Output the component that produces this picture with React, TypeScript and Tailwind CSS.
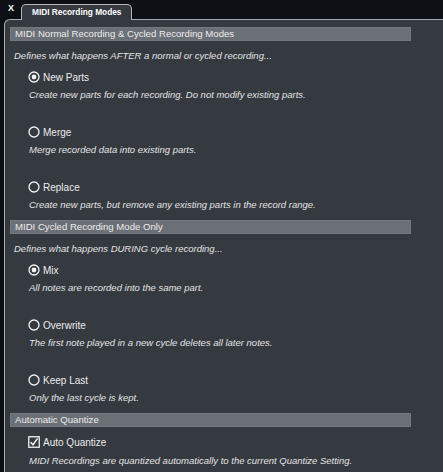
import React from "react";

type Option = { label: string; desc: string; checked?: boolean };

const normalModes: Option[] = [
  { label: "New Parts", desc: "Create new parts for each recording. Do not modify existing parts.", checked: true },
  { label: "Merge", desc: "Merge recorded data into existing parts." },
  { label: "Replace", desc: "Create new parts, but remove any existing parts in the record range." },
];

const cycledModes: Option[] = [
  { label: "Mix", desc: "All notes are recorded into the same part.", checked: true },
  { label: "Overwrite", desc: "The first note played in a new cycle deletes all later notes." },
  { label: "Keep Last", desc: "Only the last cycle is kept." },
];

function SectionHeader({ title }: { title: string }) {
  return (
    <div className="h-[14px] w-[401px] bg-[#6b6f76] border border-[#73777e] flex items-center pl-[4px] text-[9.6px] leading-none text-[#ececec]">
      {title}
    </div>
  );
}

function RadioDot({ checked }: { checked?: boolean }) {
  return (
    <svg width="12" height="12" viewBox="0 0 12 12" className="shrink-0">
      <circle cx="6" cy="6" r="5" fill="none" stroke="#f2f2f2" strokeWidth="1.3" />
      {checked && <circle cx="6" cy="6" r="2.4" fill="#f2f2f2" />}
    </svg>
  );
}

function CheckBox() {
  return (
    <svg width="12" height="12" viewBox="0 0 12 12" className="shrink-0">
      <rect x="0.75" y="0.75" width="10.5" height="10.5" fill="none" stroke="#f2f2f2" strokeWidth="1.3" />
      <path d="M2.6 6.2 L5 8.8 L9.6 2.4" fill="none" stroke="#f2f2f2" strokeWidth="1.5" />
    </svg>
  );
}

function OptionBlock({ opt, first }: { opt: Option; first?: boolean }) {
  return (
    <div className={first ? "mt-[7px]" : "mt-[23px]"}>
      <div className="h-[14px] flex items-center gap-[3px] pl-[18px] text-[10px] text-[#ececec]">
        <RadioDot checked={opt.checked} />
        <span>{opt.label}</span>
      </div>
      <div className="mt-[4px] h-[14px] flex items-center pl-[19px] text-[9.5px] italic text-[#e4e4e4]">
        {opt.desc}
      </div>
    </div>
  );
}

export default function App() {
  return (
    <div
      className="w-[443px] h-[472px] overflow-hidden bg-[#0c0f13] flex flex-col"
      style={{ fontFamily: '"Liberation Sans", Arial, sans-serif' }}
    >
      <div className="h-[19px] flex items-end shrink-0">
        <div className="w-[21px] h-full flex items-center justify-center pl-[1px] pb-[1px] text-[9px] font-bold text-white">
          X
        </div>
        <div className="relative z-10 -mb-px h-[16px] w-[111px] bg-[#353940] border border-b-0 border-[#b4b8bd] rounded-t-[5px] flex items-center pl-[10px] text-[8.3px] font-bold text-white">
          MIDI Recording Modes
        </div>
      </div>

      <div className="flex-1 ml-[4px] bg-[#353940] border-t border-l border-[#a9adb2] rounded-tl-[6px] pl-[5px] pt-[7px]">
        <SectionHeader title="MIDI Normal Recording & Cycled Recording Modes" />
        <div className="mt-[8px] h-[14px] flex items-center pl-[4px] text-[9.5px] italic text-[#e4e4e4]">
          Defines what happens AFTER a normal or cycled recording...
        </div>
        {normalModes.map((o, i) => (
          <OptionBlock key={o.label} opt={o} first={i === 0} />
        ))}

        <div className="mt-[8px]">
          <SectionHeader title="MIDI Cycled Recording Mode Only" />
        </div>
        <div className="mt-[8px] h-[14px] flex items-center pl-[4px] text-[9.5px] italic text-[#e4e4e4]">
          Defines what happens DURING cycle recording...
        </div>
        {cycledModes.map((o, i) => (
          <OptionBlock key={o.label} opt={o} first={i === 0} />
        ))}

        <div className="mt-[8px]">
          <SectionHeader title="Automatic Quantize" />
        </div>
        <div className="mt-[8px] h-[14px] flex items-center gap-[3px] pl-[18px] text-[10px] text-[#ececec]">
          <CheckBox />
          <span>Auto Quantize</span>
        </div>
        <div className="mt-[5px] h-[14px] flex items-center pl-[19px] text-[9.5px] italic text-[#e4e4e4]">
          MIDI Recordings are quantized automatically to the current Quantize Setting.
        </div>
      </div>
    </div>
  );
}
